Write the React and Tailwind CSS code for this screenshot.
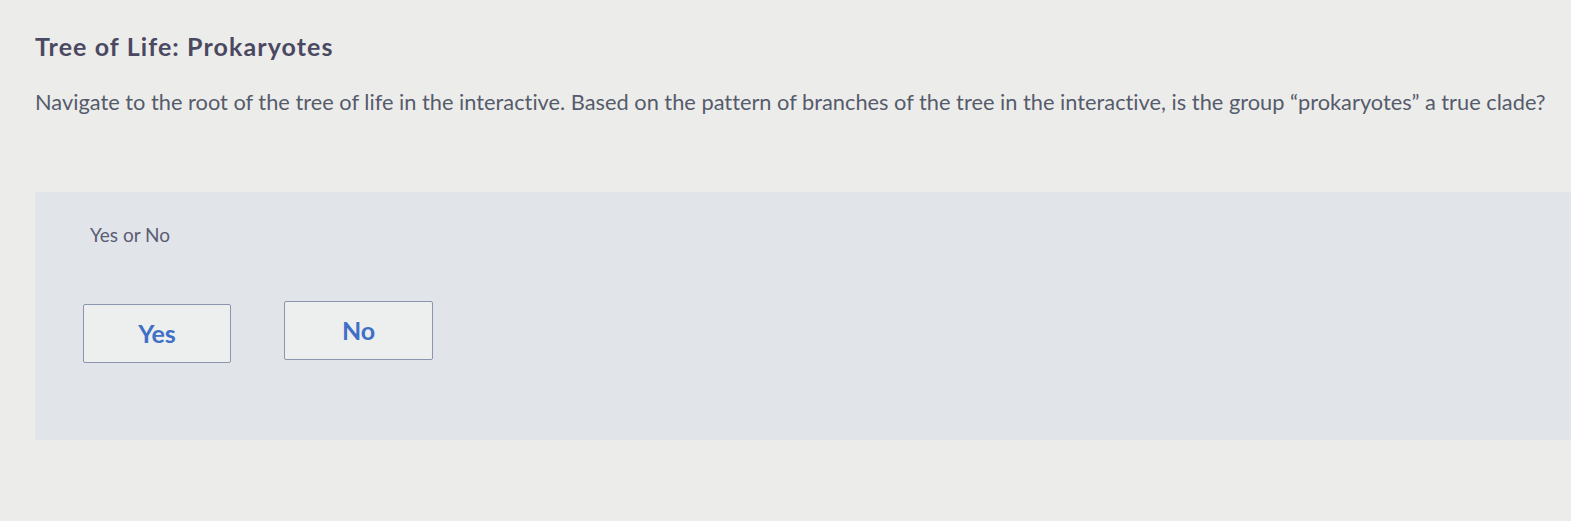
import React from 'react';

function App() {
  return (
    <div
      className="w-[1571px] h-[521px] overflow-hidden bg-[#ecedea] pt-[30px] [font-variant-ligatures:none]"
      style={{ fontFamily: 'Lato, "Open Sans", sans-serif' }}
    >
      {/* Title */}
      <h1 className="ml-[35px] text-[25px] leading-[32px] font-bold text-[#4b4862] tracking-[1.1px]">
        Tree of Life: Prokaryotes
      </h1>

      {/* Question */}
      <p className="ml-[35px] mt-[26px] text-[21.8px] leading-[28px] text-[#565b6c] whitespace-nowrap">
        Navigate to the root of the tree of life in the interactive. Based on the pattern of branches of the tree in the interactive, is the group “prokaryotes” a true clade?
      </p>

      {/* Answer panel */}
      <div className="ml-[35px] mt-[76px] h-[248px] bg-[#e1e5ea] pt-[31px] pl-[55px]">
        <div className="text-[19px] leading-[24px] text-[#5b5c72]">Yes or No</div>
        <div className="mt-[54px] -ml-[7px] flex items-start gap-[53px]">
          <button className="mt-[3px] w-[148px] h-[59px] border border-[#8a96ab] bg-[#edefee] rounded-[2px] text-[25px] font-bold text-[#3f6fc6]">
            Yes
          </button>
          <button className="w-[149px] h-[59px] border border-[#8a96ab] bg-[#edefee] rounded-[2px] text-[25px] font-bold text-[#3f6fc6]">
            No
          </button>
        </div>
      </div>
    </div>
  );
}

export default App;
